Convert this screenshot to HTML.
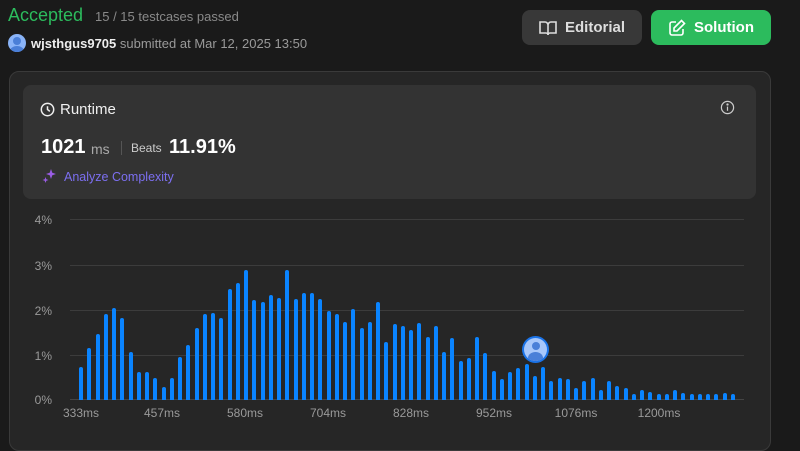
<!DOCTYPE html>
<html><head><meta charset="utf-8"><style>
*{box-sizing:border-box;margin:0;padding:0}
body{width:800px;height:433px;overflow:hidden;background:#1a1a1a;font-family:"Liberation Sans",sans-serif;position:relative;color:#eee}
.abs{position:absolute}
.btn{position:absolute;top:10px;height:35px;width:120px;border-radius:8px;display:flex;align-items:center;justify-content:center;font-weight:bold;font-size:15px;gap:8px}
.panel{position:absolute;left:9px;top:71px;width:762px;height:380px;border:1px solid #3a3a3a;border-radius:10px;background:#262626}
.card{position:absolute;left:23px;top:85px;width:733px;height:114px;background:#333;border-radius:8px}
.grid{position:absolute;left:70px;width:674px;height:1px;background:#3c3c3c}
.yl{position:absolute;left:30px;width:22px;text-align:right;font-size:12px;color:#9a9a9a}
.xl{position:absolute;top:406px;font-size:12px;color:#9a9a9a;width:60px;text-align:center}
#bars{position:absolute;left:79px;top:250px;height:149.5px;display:flex;align-items:flex-end}
#bars i{display:block;width:4px;margin-right:4.26px;background:#0a84ff;border-radius:2px 2px 0 0}
</style></head><body>
<div class="abs" style="left:8px;top:5px;font-size:18px;color:#2cbb5d">Accepted</div>
<div class="abs" style="left:95px;top:9px;font-size:13px;color:#8a8a8a">15 / 15 testcases passed</div>
<div class="abs" style="left:8px;top:34px;width:18px;height:18px;border-radius:50%;background:#8ab4f8;overflow:hidden">
<div class="abs" style="left:5px;top:3px;width:8px;height:8px;border-radius:50%;background:#4a7fd8"></div>
<div class="abs" style="left:2px;top:12px;width:14px;height:10px;border-radius:50%;background:#4a7fd8"></div></div>
<div class="abs" style="left:31px;top:36px;font-size:13px"><b style="color:#eee">wjsthgus9705</b> <span style="color:#9a9a9a">submitted at Mar 12, 2025 13:50</span></div>
<div class="btn" style="left:522px;background:#383838;color:#ddd">
<svg width="18" height="16" viewBox="0 0 18 16" fill="none" stroke="#ddd" stroke-width="1.6"><path d="M1 2h5a3 3 0 0 1 3 3v10a2 2 0 0 0-2-2H1zM17 2h-5a3 3 0 0 0-3 3v10a2 2 0 0 1 2-2h6z"/></svg>Editorial</div>
<div class="btn" style="left:651px;background:#2cbb5d;color:#fff">
<svg width="18" height="18" viewBox="0 0 18 18" fill="none" stroke="#fff" stroke-width="1.6"><path d="M8 3H4a2 2 0 0 0-2 2v9a2 2 0 0 0 2 2h9a2 2 0 0 0 2-2v-4"/><path d="M13.5 1.5l3 3L9 12H6V9z"/></svg>Solution</div>
<div class="panel"></div>
<div class="card"></div>
<svg class="abs" style="left:40px;top:102px" width="15" height="15" viewBox="0 0 16 16" fill="none" stroke="#eee" stroke-width="1.6"><circle cx="8" cy="8" r="6.6"/><path d="M8 4.5V8l2.5 2"/></svg>
<div class="abs" style="left:60px;top:101px;font-size:15px;color:#f0f0f0">Runtime</div>
<svg class="abs" style="left:720px;top:100px" width="15" height="15" viewBox="0 0 16 16" fill="none" stroke="#ccc" stroke-width="1.3"><circle cx="8" cy="8" r="6.5"/><path d="M8 7v4.5"/><circle cx="8" cy="4.8" r=".6" fill="#ccc"/></svg>
<div class="abs" style="left:41px;top:136px;font-size:20px;font-weight:bold;color:#fff">1021</div>
<div class="abs" style="left:91px;top:141px;font-size:14px;color:#aaa">ms</div>
<div class="abs" style="left:121px;top:141px;width:1px;height:14px;background:#555"></div>
<div class="abs" style="left:131px;top:141px;font-size:12px;color:#ccc">Beats</div>
<div class="abs" style="left:169px;top:136px;font-size:20px;font-weight:bold;color:#fff">11.91%</div>
<svg class="abs" style="left:41px;top:168px" width="17" height="17" viewBox="0 0 17 17" fill="#9b5de5"><path d="M10 1l1.3 3.7L15 6l-3.7 1.3L10 11 8.7 7.3 5 6l3.7-1.3z"/><path d="M4.5 9l.8 2.2 2.2.8-2.2.8-.8 2.2-.8-2.2L1.5 12l2.2-.8z"/></svg>
<div class="abs" style="left:64px;top:170px;font-size:12.5px;color:#7c6ff0">Analyze Complexity</div>
<div class="grid" style="top:219px"></div><div class="grid" style="top:265px"></div><div class="grid" style="top:310px"></div><div class="grid" style="top:355px"></div><div class="grid" style="top:399px;background:#444"></div>
<div class="yl" style="top:213px">4%</div><div class="yl" style="top:259px">3%</div><div class="yl" style="top:304px">2%</div><div class="yl" style="top:349px">1%</div><div class="yl" style="top:393px">0%</div>
<div id="bars">
<i style="height:33px"></i><i style="height:52px"></i><i style="height:66px"></i><i style="height:86px"></i><i style="height:92px"></i><i style="height:82px"></i><i style="height:48px"></i><i style="height:28px"></i><i style="height:28px"></i><i style="height:22px"></i><i style="height:13px"></i><i style="height:22px"></i><i style="height:43px"></i><i style="height:55px"></i><i style="height:72px"></i><i style="height:86px"></i><i style="height:87px"></i><i style="height:82px"></i><i style="height:111px"></i><i style="height:117px"></i><i style="height:130px"></i><i style="height:100px"></i><i style="height:98px"></i><i style="height:105px"></i><i style="height:102px"></i><i style="height:130px"></i><i style="height:101px"></i><i style="height:107px"></i><i style="height:107px"></i><i style="height:101px"></i><i style="height:89px"></i><i style="height:86px"></i><i style="height:78px"></i><i style="height:91px"></i><i style="height:72px"></i><i style="height:78px"></i><i style="height:98px"></i><i style="height:58px"></i><i style="height:76px"></i>
<i style="height:74px"></i><i style="height:70px"></i><i style="height:77px"></i><i style="height:63px"></i><i style="height:74px"></i><i style="height:48px"></i><i style="height:62px"></i><i style="height:39px"></i><i style="height:42px"></i><i style="height:63px"></i><i style="height:47px"></i><i style="height:29px"></i><i style="height:21px"></i><i style="height:28px"></i><i style="height:32px"></i><i style="height:36px"></i><i style="height:24px"></i><i style="height:33px"></i><i style="height:19px"></i><i style="height:22px"></i><i style="height:21px"></i><i style="height:12px"></i><i style="height:19px"></i><i style="height:22px"></i><i style="height:10px"></i><i style="height:19px"></i><i style="height:14px"></i><i style="height:12px"></i><i style="height:6px"></i><i style="height:10px"></i><i style="height:8px"></i><i style="height:6px"></i><i style="height:6px"></i><i style="height:10px"></i><i style="height:7px"></i><i style="height:6px"></i><i style="height:6px"></i><i style="height:6px"></i><i style="height:6px"></i><i style="height:7px"></i><i style="height:6px"></i>
</div>
<div class="abs" style="left:522px;top:336px;width:27px;height:27px;border-radius:50%;background:#1a73e8;padding:2px">
<div style="width:23px;height:23px;border-radius:50%;background:#a8c7fa;position:relative;overflow:hidden">
<div class="abs" style="left:7.5px;top:4px;width:8px;height:8px;border-radius:50%;background:#4a7fd8"></div>
<div class="abs" style="left:4px;top:14px;width:15px;height:12px;border-radius:50%;background:#4a7fd8"></div></div></div>
<div class="xl" style="left:51px">333ms</div><div class="xl" style="left:132px">457ms</div><div class="xl" style="left:215px">580ms</div><div class="xl" style="left:298px">704ms</div><div class="xl" style="left:381px">828ms</div><div class="xl" style="left:464px">952ms</div><div class="xl" style="left:546px">1076ms</div><div class="xl" style="left:629px">1200ms</div>
</body></html>
